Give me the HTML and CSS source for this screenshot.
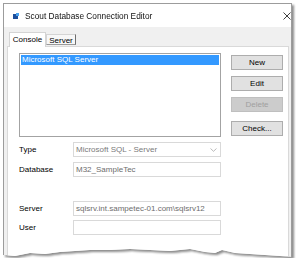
FILE: index.html
```html
<!DOCTYPE html>
<html>
<head>
<meta charset="utf-8">
<link rel="stylesheet" href="styles.css">
</head>
<body>
<div class="shot">
  <div class="window">
    <div class="titlebar">
      <svg class="app-icon" width="6" height="6" viewBox="0 0 6 6">
        <rect x="0" y="1" width="5" height="5" fill="#1d4f9c"/>
        <rect x="3" y="0" width="3" height="3" fill="#4aa3f0"/>
      </svg>
      <span class="title">Scout Database Connection Editor</span>
      <svg class="close" width="8" height="8" viewBox="0 0 8 8">
        <path d="M0.5 0.5 L7.5 7.5 M7.5 0.5 L0.5 7.5" stroke="#2b2b2b" stroke-width="0.9" fill="none"/>
      </svg>
    </div>
    <div class="tabstrip">
      <div class="tab active">Console</div>
      <div class="tab inactive">Server</div>
    </div>
    <div class="panel">
      <div class="top">
        <div class="list">
          <div class="item selected">Microsoft SQL Server</div>
        </div>
        <div class="buttons">
          <div class="btn">New</div>
          <div class="btn">Edit</div>
          <div class="btn disabled">Delete</div>
          <div class="btn check">Check...</div>
        </div>
      </div>
      <div class="form">
        <div class="label">Type</div>
        <div class="field combo">
          <span class="val">Microsoft SQL - Server</span>
          <svg class="chev" width="7" height="4" viewBox="0 0 7 4">
            <path d="M0.5 0.5 L3.5 3.3 L6.5 0.5" stroke="#a8a8a8" stroke-width="0.8" fill="none"/>
          </svg>
        </div>
        <div class="label">Database</div>
        <div class="field">M32_SampleTec</div>
        <div class="spacer"></div>
        <div class="label">Server</div>
        <div class="field">sqlsrv.int.sampetec-01.com\sqlsrv12</div>
        <div class="label">User</div>
        <div class="field"></div>
      </div>
    </div>
  </div>
</div>
</body>
</html>
```
FILE: styles.css
```css
html, body {
  margin: 0;
  background: #ffffff;
}

body {
  font-family: "Liberation Sans", Arial, sans-serif;
  color: #000;
}

.shot {
  width: 289px;
  padding: 3px 0 0 3px;
  filter: drop-shadow(2px 2px 1px rgba(0, 0, 0, 0.45));
}

.window {
  width: 289px;
  height: 255px;
  box-sizing: border-box;
  border: 1px solid #9c9c9c;
  background: #f0f0f0;
  display: flex;
  flex-direction: column;
  clip-path: polygon(0 0, 289px 0, 289px 254px, 277px 253px, 262px 252px, 247px 251px, 232px 250px, 219px 247px, 212px 250px, 202px 249px, 187px 246px, 167px 248px, 147px 247px, 127px 246px, 107px 247px, 87px 247px, 72px 248px, 57px 249px, 42px 251px, 27px 250px, 12px 253px, 0 252px);
}

.titlebar {
  height: 23px;
  flex: none;
  background: #ffffff;
  display: flex;
  align-items: center;
  padding-left: 9px;
  font-size: 8.3px;
}

.app-icon {
  margin-right: 6px;
  flex: none;
}

.title {
  flex: 1;
  color: #111;
}

.close {
  flex: none;
  margin-right: 0;
}

.tabstrip {
  height: 19px;
  flex: none;
  display: flex;
  align-items: flex-end;
  padding-left: 5px;
  font-size: 8px;
}

.tab {
  box-sizing: border-box;
  display: flex;
  align-items: center;
  justify-content: center;
}

.tab.active {
  width: 37px;
  height: 15px;
  border: 1px solid #d4d4d4;
  border-bottom: none;
  background: #ffffff;
  margin-bottom: -1px;
  position: relative;
  z-index: 1;
  padding-bottom: 2px;
}

.tab.inactive {
  width: 30px;
  height: 11px;
  margin-bottom: 1px;
  border: 1px solid #d4d4d4;
  border-right: 1px solid #6e6e6e;
  border-bottom: 1px solid #9a9a9a;
  background: #f7f7f7;
  padding-top: 1px;
}

.panel {
  flex: 1;
  margin: 0 2px 0 3px;
  background: #ffffff;
  border: 1px solid #d9d9d9;
  padding: 6px 5px 0 11px;
  font-size: 8px;
}

.top {
  display: grid;
  grid-template-columns: 202px 52px;
  column-gap: 10px;
}

.list {
  height: 84px;
  box-sizing: border-box;
  border: 1px solid #a3a3a3;
  padding: 1px;
}

.item {
  height: 10px;
  line-height: 10px;
  padding-left: 1px;
}

.item.selected {
  background: #3399ff;
  color: #ffffff;
}

.buttons {
  display: flex;
  flex-direction: column;
  gap: 6px;
  padding-top: 2px;
}

.btn {
  height: 15px;
  box-sizing: border-box;
  border: 1px solid #adadad;
  background: #e1e1e1;
  display: flex;
  align-items: center;
  justify-content: center;
  color: #000;
}

.btn.disabled {
  background: #cccccc;
  border-color: #bfbfbf;
  color: #a0a0a0;
}

.btn.check {
  margin-top: 3px;
}

.form {
  display: grid;
  grid-template-columns: 54px 148px;
  grid-auto-rows: 15px;
  row-gap: 4.5px;
  margin-top: 5px;
  align-items: center;
}

.label {
  color: #000;
}

.spacer {
  grid-column: 1 / 3;
}

.field {
  height: 15px;
  box-sizing: border-box;
  border: 1px solid #d9d9d9;
  padding-left: 2px;
  color: #6d6d6d;
  display: flex;
  align-items: center;
  white-space: nowrap;
  overflow: hidden;
}

.combo .val {
  flex: 1;
  color: #7a7a7a;
}

.chev {
  margin-right: 3px;
  flex: none;
}
```
